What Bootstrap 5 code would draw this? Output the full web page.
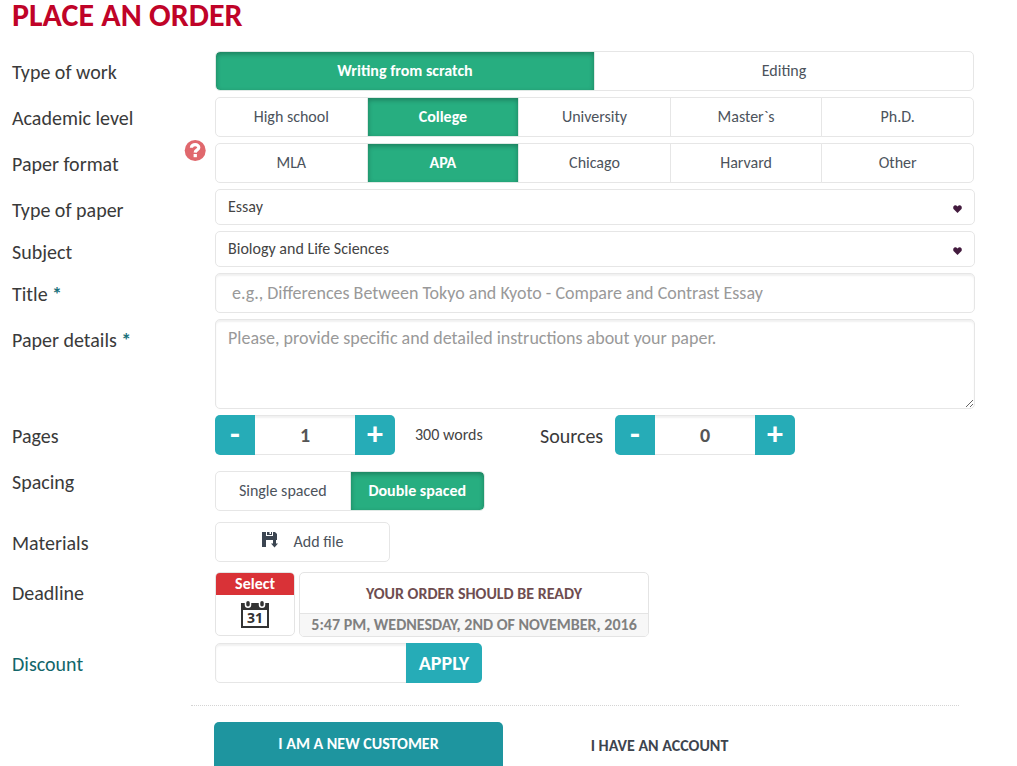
<!DOCTYPE html>
<html lang="en">
<head>
<meta charset="utf-8">
<meta name="viewport" content="width=device-width, initial-scale=1">
<title>Place an order</title>
<link href="https://cdn.jsdelivr.net/npm/bootstrap@5.3.0/dist/css/bootstrap.min.css" rel="stylesheet">
<style>
body{font-family:Carlito,Lato,"Liberation Sans",sans-serif;font-size:16px;line-height:20px;color:#444;background:#fff}
.order-form{padding:0 42px 0 12px}
.order-title{font-size:32px;line-height:32px;font-weight:700;color:#c00328;margin:0 0 19px}
.field-row{display:grid;grid-template-columns:203px minmax(0,1fr);margin-bottom:6px;position:relative}
.field-label{font-size:20px;line-height:24px;padding-top:9px;color:#3a3a3a}
.required-star{color:#18707a;font-weight:700}
.discount-label{color:#12666a}
.help-btn{position:absolute;left:172px;top:-4px;width:22px;height:22px;padding:0;border:0;background:none;line-height:0}
.choice-group{height:40px;margin-right:1px}
.choice-group .btn,.file-btn{font-size:16px;line-height:20px;color:#4c535c;background:#fff;border:1px solid #e6e6e6;border-radius:5px;padding:9px 0}
.choice-group .btn{flex:1 1 0}
.choice-group .btn-check:checked+.btn{background:#27ae80;color:#fff;font-weight:700;border-color:#dfe9e5;background-clip:padding-box;box-shadow:inset 0 2px 5px rgba(0,0,0,.28)}
.spacing-group{width:270px;margin-top:10px}
.order-input{border:1px solid #e6e6e6;border-radius:5px;font-size:18px;line-height:24px;color:#555;padding:7px 16px;height:40px;box-shadow:inset 0 2px 2px rgba(0,0,0,.06)}
.order-input::placeholder{color:#999}
textarea.order-input{height:90px;padding:6px 12px;resize:vertical}
.order-select{height:36px;font-size:16px;line-height:20px;color:#444;border:1px solid #e6e6e6;border-radius:5px;padding:7px 12px;background-image:url("data:image/svg+xml,%3Csvg xmlns='http://www.w3.org/2000/svg' viewBox='0 0 9 8'%3E%3Cpath fill='%23431b3e' d='M4.5 8 0.5 4Q0 2.8 .4 1.5Q2.2-.8 4.5 1.4Q6.8-.8 8.6 1.5Q9 2.8 8.5 4Z'/%3E%3C/svg%3E");background-size:9px 8px;background-position:right 12px top 15px}
.stepper{width:180px;flex:none;flex-wrap:nowrap}
.stepper .btn,.apply-btn{background:#26acb7;color:#fff;font-weight:700;border:0;border-radius:5px}
.stepper .btn{width:40px;height:40px;padding:0;font-size:32px;line-height:38px}
.stepper .order-input{text-align:center;font-weight:700;font-size:20px;padding:7px 0;border-width:1px 0}
.word-count{flex:none;width:125px;margin-left:20px}
.sources-label{flex:none;width:75px}
.materials-row{margin:11px 0 10px}
.file-btn{width:175px;height:40px}
.file-btn svg{margin-bottom:4px}
.date-btn{display:flex;flex-direction:column;align-items:center;width:80px;height:64px;border:1px solid #e4e4e4;border-radius:5px;background:#fff;padding:0;overflow:hidden}
.date-head{width:100%;background:#d93237;color:#fff;font-size:16px;font-weight:700;line-height:22px;height:22px}
.date-btn svg{margin-top:5px}
.ready-box{width:350px;border:1px solid #e4e4e4;border-radius:5px;text-align:center;font-weight:700;overflow:hidden}
.ready-head{line-height:20px;padding:11px 0 9px;color:#6e4d50}
.ready-date{line-height:22px;background:#f7f7f7;border-top:1px solid #e4e4e4;color:#808080}
.coupon{width:267px}
.apply-btn{font-size:20px;line-height:24px;width:76px;padding:8px 0}
.divider{border-top:1px dotted #d4d4d4;margin:22px 16px 16px 179px}
.customer-actions{margin-left:202px;gap:12px}
.customer-actions .btn{width:289px;height:44px;font-size:16px;line-height:20px;font-weight:700;border:0;border-radius:5px 5px 0 0;padding:12px 0}
.new-btn{background:#1e959f;color:#fff}
.customer-actions .account-link{color:#3d444e;padding-top:14px}
.btn:hover{filter:brightness(.96)}
</style>
</head>
<body>
<form class="order-form">
  <h1 class="order-title">PLACE AN ORDER</h1>

  <div class="field-row">
    <div class="field-label" id="lbl-work">Type of work</div>
    <div class="btn-group choice-group" role="group" aria-labelledby="lbl-work">
      <input class="btn-check" type="radio" name="work" id="w1" checked><label class="btn" for="w1">Writing from scratch</label>
      <input class="btn-check" type="radio" name="work" id="w2"><label class="btn" for="w2">Editing</label>
    </div>
  </div>

  <div class="field-row">
    <div class="field-label" id="lbl-level">Academic level</div>
    <div class="btn-group choice-group" role="group" aria-labelledby="lbl-level">
      <input class="btn-check" type="radio" name="level" id="l1"><label class="btn" for="l1">High school</label>
      <input class="btn-check" type="radio" name="level" id="l2" checked><label class="btn" for="l2">College</label>
      <input class="btn-check" type="radio" name="level" id="l3"><label class="btn" for="l3">University</label>
      <input class="btn-check" type="radio" name="level" id="l4"><label class="btn" for="l4">Master`s</label>
      <input class="btn-check" type="radio" name="level" id="l5"><label class="btn" for="l5">Ph.D.</label>
    </div>
  </div>

  <div class="field-row">
    <div class="field-label" id="lbl-format">Paper format</div>
    <button class="help-btn" type="button" aria-label="Help">
      <svg width="22" height="22" viewBox="0 0 22 22"><circle cx="11.2" cy="11.500" r="10.500" fill="#e0686d"/><path d="M7.400 8.800C7.500 4.500 15 4.800 14.800 8.700C14.700 11 11.300 10.800 11.200 13.600" fill="none" stroke="#fff" stroke-width="3.200"/><rect x="9.600" y="15" width="3.300" height="3.200" fill="#fff"/></svg>
    </button>
    <div class="btn-group choice-group" role="group" aria-labelledby="lbl-format">
      <input class="btn-check" type="radio" name="format" id="f1"><label class="btn" for="f1">MLA</label>
      <input class="btn-check" type="radio" name="format" id="f2" checked><label class="btn" for="f2">APA</label>
      <input class="btn-check" type="radio" name="format" id="f3"><label class="btn" for="f3">Chicago</label>
      <input class="btn-check" type="radio" name="format" id="f4"><label class="btn" for="f4">Harvard</label>
      <input class="btn-check" type="radio" name="format" id="f5"><label class="btn" for="f5">Other</label>
    </div>
  </div>

  <div class="field-row">
    <label class="field-label" for="paper">Type of paper</label>
    <select class="form-select order-select" id="paper"><option>Essay</option><option>Research paper</option></select>
  </div>
  <div class="field-row">
    <label class="field-label" for="subject">Subject</label>
    <select class="form-select order-select" id="subject"><option>Biology and Life Sciences</option><option>History</option></select>
  </div>
  <div class="field-row">
    <label class="field-label" for="title">Title <span class="required-star">*</span></label>
    <input class="form-control order-input" id="title" type="text" placeholder="e.g., Differences Between Tokyo and Kyoto - Compare and Contrast Essay">
  </div>
  <div class="field-row">
    <label class="field-label" for="details">Paper details <span class="required-star">*</span></label>
    <textarea class="form-control order-input" id="details" placeholder="Please, provide specific and detailed instructions about your paper."></textarea>
  </div>

  <div class="field-row">
    <label class="field-label" for="pages">Pages</label>
    <div class="d-flex">
      <div class="input-group stepper">
        <button class="btn" type="button" aria-label="Fewer pages">-</button>
        <input class="form-control order-input" id="pages" type="text" value="1">
        <button class="btn" type="button" aria-label="More pages">+</button>
      </div>
      <div class="word-count align-self-center">300 words</div>
      <label class="field-label sources-label" for="sources">Sources</label>
      <div class="input-group stepper">
        <button class="btn" type="button" aria-label="Fewer sources">-</button>
        <input class="form-control order-input" id="sources" type="text" value="0">
        <button class="btn" type="button" aria-label="More sources">+</button>
      </div>
    </div>
  </div>

  <div class="field-row mb-0">
    <div class="field-label" id="lbl-spacing">Spacing</div>
    <div class="btn-group choice-group spacing-group" role="group" aria-labelledby="lbl-spacing">
      <input class="btn-check" type="radio" name="spacing" id="s1"><label class="btn" for="s1">Single spaced</label>
      <input class="btn-check" type="radio" name="spacing" id="s2" checked><label class="btn" for="s2">Double spaced</label>
    </div>
  </div>

  <div class="field-row materials-row">
    <div class="field-label">Materials</div>
    <div>
      <button class="btn file-btn d-flex align-items-center justify-content-center" type="button">
        <svg class="me-3" width="16" height="16" viewBox="0 0 16 16"><path fill="#3b4551" d="M0 0H4V4H11V0H13L15 2V8H4V15H0ZM5 0H7.500V2H9V0H10V3H5ZM11 7H14V11.500H16L12.500 15.500L9 11.500H11Z"/></svg>
        Add file
      </button>
    </div>
  </div>

  <div class="field-row">
    <div class="field-label">Deadline</div>
    <div class="d-flex gap-1 align-items-start">
      <button class="date-btn" type="button"><span class="date-head">Select</span>
        <svg width="28" height="29" viewBox="0 0 28 29"><path fill="#333" fill-rule="evenodd" d="M0 3H28V28H0ZM2 10V26H26V10Z"/><g fill="#333" stroke="#fff" stroke-width="1.500"><rect x="4.500" y=".2" width="5" height="7" rx="2.500"/><rect x="18.500" y=".2" width="5" height="7" rx="2.500"/></g><text x="14" y="23" text-anchor="middle" font-family="Open Sans, sans-serif" font-size="14" font-weight="700" fill="#333">31</text></svg>
      </button>
      <div class="ready-box">
        <div class="ready-head">YOUR ORDER SHOULD BE READY</div>
        <div class="ready-date">5:47 PM, WEDNESDAY, 2ND OF NOVEMBER, 2016</div>
      </div>
    </div>
  </div>

  <div class="field-row mb-0">
    <label class="field-label discount-label" for="discount">Discount</label>
    <div class="input-group coupon">
      <input class="form-control order-input" id="discount" type="text">
      <button class="btn apply-btn" type="button">APPLY</button>
    </div>
  </div>

  <div class="divider"></div>
  <div class="customer-actions d-flex">
    <button class="btn new-btn" type="submit">I AM A NEW CUSTOMER</button>
    <a class="btn account-link" href="#login">I HAVE AN ACCOUNT</a>
  </div>
</form>
<script src="https://cdn.jsdelivr.net/npm/bootstrap@5.3.0/dist/js/bootstrap.bundle.min.js"></script>
</body>
</html>
